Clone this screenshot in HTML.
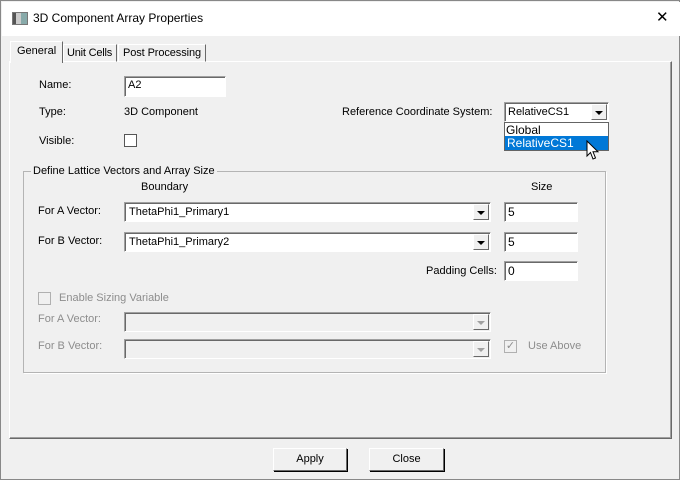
<!DOCTYPE html>
<html><head><style>
*{box-sizing:border-box;margin:0;padding:0}
body{width:680px;height:480px;background:#fff;font-family:"Liberation Sans",sans-serif;font-size:11px;color:#000;position:relative;overflow:hidden}
.a{position:absolute;white-space:nowrap}
.win{position:absolute;left:0;top:0;width:680px;height:480px;border:1px solid #888;background:#f0f0f0}
.title{position:absolute;left:1px;top:1px;width:678px;height:34px;background:#fff}
.tb{position:absolute;background:#fff;border:1px solid;border-color:#a0a0a0 #fff #fff #a0a0a0;box-shadow:inset 1px 1px 0 #696969}
.cb{position:absolute;background:#fff;border:1px solid;border-color:#a0a0a0 #fff #fff #a0a0a0;box-shadow:inset 1px 1px 0 #696969}
.btnd{position:absolute;right:1px;top:1px;width:16px;bottom:1px;background:#f0f0f0;border:1px solid;border-color:#fff #696969 #696969 #fff}
.btnd:after{content:"";position:absolute;left:3px;top:6px;border-left:4px solid transparent;border-right:4px solid transparent;border-top:4px solid #000}
.dis .btnd:after{border-top-color:#a0a0a0}
.dis{background:#f0f0f0}
.g{color:#8d8d8d}
.chk{position:absolute;width:13px;height:13px;background:#fff;border:1px solid #555}
.btn{position:absolute;height:23px;border:1px solid;border-color:#fff #696969 #696969 #fff;background:#f0f0f0;text-align:center;line-height:21px;box-shadow:1px 1px 0 #000}
</style></head><body>
<div class="win">
<div class="title"></div>
<div class="a" style="left:11px;top:11px;width:16px;height:13px;border:1px solid #777;background:linear-gradient(90deg,#555 0 3px,#ccc 3px 8px,#8aa 8px)"></div>
<div class="a" style="left:32px;top:10px;font-size:12px">3D Component Array Properties</div>
<div class="a" style="left:655px;top:7px;font-size:15px">✕</div>

<div class="a" style="left:8px;top:60px;width:663px;height:378px;border:1px solid;border-color:#fff #696969 #696969 #fff;box-shadow:inset -1px -1px 0 #a0a0a0"></div>
<div class="a" style="left:62px;top:43px;width:54px;height:18px;border:1px solid;border-color:#fff #696969 transparent #fff;padding:2px 0 0 3px;letter-spacing:-0.2px">Unit Cells</div>
<div class="a" style="left:117px;top:43px;width:88px;height:18px;border:1px solid;border-color:#fff #696969 transparent #fff;padding:2px 0 0 4px;letter-spacing:-0.1px">Post Processing</div>
<div class="a" style="left:9px;top:40px;width:53px;height:22px;background:#f0f0f0;border:1px solid;border-bottom:none;border-color:#fff #696969 #f0f0f0 #fff;padding:3px 0 0 6px">General</div>

<div class="a" style="left:38px;top:78px">Name:</div>
<div class="tb" style="left:123px;top:75px;width:102px;height:21px;padding:2px 3px">A2</div>
<div class="a" style="left:38px;top:105px">Type:</div>
<div class="a" style="left:123px;top:105px">3D Component</div>
<div class="a" style="left:38px;top:134px">Visible:</div>
<div class="chk" style="left:123px;top:133px"></div>

<div class="a" style="left:341px;top:105px">Reference Coordinate System:</div>
<div class="cb" style="left:503px;top:101px;width:105px;height:20px;padding:3px 3px">RelativeCS1<div class="btnd"></div></div>
<div class="a" style="left:503px;top:121px;width:105px;height:29px;background:#fff;border:1px solid #646464"></div>
<div class="a" style="left:505px;top:122px;font-size:12px">Global</div>
<div class="a" style="left:504px;top:135px;width:103px;height:14px;background:#0078d7;color:#fff;font-size:12px;padding-left:2px">RelativeCS1</div>
<svg class="a" style="left:585px;top:139px" width="14" height="21" viewBox="0 0 14 21"><path d="M1 1 L1 16 L4.5 12.5 L7 19 L9.5 18 L7 11.8 L12 11.8 Z" fill="#fff" stroke="#000" stroke-width="1"/></svg>

<div class="a" style="left:22px;top:170px;width:583px;height:202px;border:1px solid #b4b4b4;box-shadow:1px 1px 0 #fff"></div>
<div class="a" style="left:30px;top:164px;background:#f0f0f0;padding:0 2px">Define Lattice Vectors and Array Size</div>
<div class="a" style="left:140px;top:180px">Boundary</div>
<div class="a" style="left:530px;top:180px">Size</div>

<div class="a" style="left:37px;top:204px">For A Vector:</div>
<div class="cb" style="left:123px;top:201px;width:367px;height:20px;padding:3px 4px">ThetaPhi1_Primary1<div class="btnd"></div></div>
<div class="tb" style="left:503px;top:201px;width:74px;height:20px;padding:2px 3px;font-size:12px">5</div>
<div class="a" style="left:37px;top:234px">For B Vector:</div>
<div class="cb" style="left:123px;top:231px;width:367px;height:20px;padding:3px 4px">ThetaPhi1_Primary2<div class="btnd"></div></div>
<div class="tb" style="left:503px;top:231px;width:74px;height:20px;padding:2px 3px;font-size:12px">5</div>
<div class="a" style="left:425px;top:264px">Padding Cells:</div>
<div class="tb" style="left:503px;top:260px;width:74px;height:20px;padding:2px 3px;font-size:12px">0</div>

<div class="chk" style="left:37px;top:291px;background:#f0f0f0;border-color:#b0b0b0"></div>
<div class="a g" style="left:58px;top:291px">Enable Sizing Variable</div>
<div class="a g" style="left:37px;top:312px">For A Vector:</div>
<div class="cb dis" style="left:123px;top:311px;width:367px;height:20px"><div class="btnd"></div></div>
<div class="a g" style="left:37px;top:339px">For B Vector:</div>
<div class="cb dis" style="left:123px;top:338px;width:367px;height:20px"><div class="btnd"></div></div>
<div class="chk" style="left:503px;top:339px;background:#f0f0f0;border-color:#b0b0b0;color:#8d8d8d;font-size:11px;line-height:11px;text-align:center">✓</div>
<div class="a g" style="left:527px;top:339px">Use Above</div>

<div class="btn" style="left:272px;top:447px;width:74px">Apply</div>
<div class="btn" style="left:368px;top:447px;width:75px">Close</div>
</div>
</body></html>
